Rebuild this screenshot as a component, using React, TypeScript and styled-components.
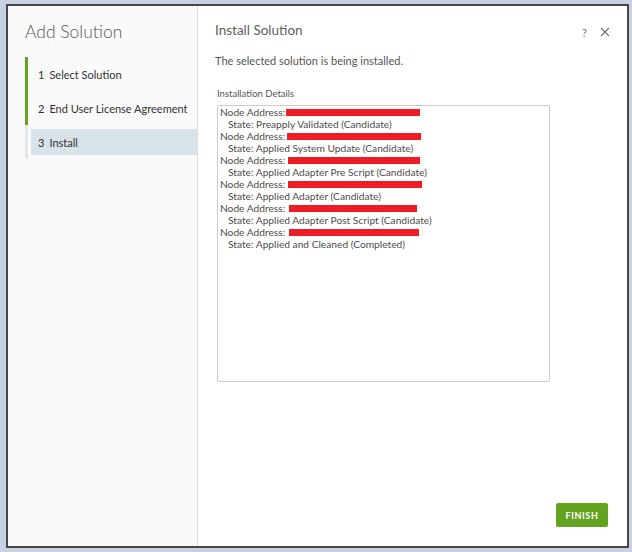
import styled, { createGlobalStyle } from "styled-components";

const GlobalStyle = createGlobalStyle`
  html, body {
    margin: 0;
    padding: 0;
    background: #c8d1e1;
  }
  body {
    font-family: Lato, "Liberation Sans", sans-serif;
    color: #565656;
  }
`;

const steps = [
  { num: 1, label: "Select Solution", done: true },
  { num: 2, label: "End User License Agreement", done: true },
  { num: 3, label: "Install", done: false, active: true },
];

const nodes = [
  { state: "Preapply Validated (Candidate)", bar: [1, 134] },
  { state: "Applied System Update (Candidate)", bar: [2, 134] },
  { state: "Applied Adapter Pre Script (Candidate)", bar: [3, 132] },
  { state: "Applied Adapter (Candidate)", bar: [3, 134] },
  { state: "Applied Adapter Post Script (Candidate)", bar: [4, 128] },
  { state: "Applied and Cleaned (Completed)", bar: [4, 130] },
];

export default function App() {
  return (
    <Page>
      <GlobalStyle />
      <Dialog>
        <Sidebar>
          <SideTitle>Add Solution</SideTitle>
          <StepList>
            {steps.map((s) => (
              <Step key={s.num} $done={s.done}>
                <StepLabel $active={s.active}>
                  <StepNum>{s.num}</StepNum>
                  {s.label}
                </StepLabel>
              </Step>
            ))}
          </StepList>
        </Sidebar>
        <Content>
          <Header>
            <Title>Install Solution</Title>
            <HeaderActions>
              <Help>?</Help>
              <Close viewBox="0 0 10 10">
                <path d="M1 1 L9 9 M9 1 L1 9" />
              </Close>
            </HeaderActions>
          </Header>
          <Message>The selected solution is being installed.</Message>
          <FieldLabel>Installation Details</FieldLabel>
          <Details>
            {nodes.map((n, i) => (
              <div key={i}>
                <Line>
                  Node Address:
                  <Redacted style={{ marginLeft: n.bar[0], width: n.bar[1] }} />
                </Line>
                <Line $indent>State: {n.state}</Line>
              </div>
            ))}
          </Details>
          <Footer>
            <FinishButton>FINISH</FinishButton>
          </Footer>
        </Content>
      </Dialog>
    </Page>
  );
}

const Page = styled.div`
  padding: 4px 0 0 6px;
  height: 552px;
  box-sizing: border-box;
`;

const Dialog = styled.div`
  width: 623px;
  height: 544px;
  box-sizing: border-box;
  border: 2px solid #474747;
  background: #fff;
  display: flex;
`;

const Sidebar = styled.div`
  width: 190px;
  flex-shrink: 0;
  background: #fafafa;
  border-right: 1px solid #dddddd;
  box-sizing: border-box;
  padding: 14px 0 0 17px;
`;

const SideTitle = styled.div`
  font-size: 17.5px;
  font-weight: 300;
  color: #565656;
  line-height: 24px;
  height: 37px;
`;

const StepList = styled.div`
  display: flex;
  flex-direction: column;
`;

const Step = styled.div<{ $done?: boolean }>`
  height: 34px;
  box-sizing: border-box;
  border-left: 3px solid ${(p) => (p.$done ? "#62a420" : "#e4e4e4")};
  padding: 4px 0 4px 3px;
  display: flex;
`;

const StepLabel = styled.div<{ $active?: boolean }>`
  flex: 1;
  display: flex;
  align-items: center;
  padding-left: 7px;
  font-size: 11px;
  color: #313131;
  background: ${(p) => (p.$active ? "#d8e3e9" : "transparent")};
`;

const StepNum = styled.span`
  margin-right: 5px;
`;

const Content = styled.div`
  flex: 1;
  display: flex;
  flex-direction: column;
  padding: 12px 0 0 17px;
  min-width: 0;
`;

const Header = styled.div`
  display: flex;
  align-items: center;
  justify-content: space-between;
  padding-right: 17px;
  height: 24px;
`;

const Title = styled.div`
  font-size: 13.5px;
  color: #5e5e5e;
`;

const HeaderActions = styled.div`
  display: flex;
  align-items: center;
  gap: 13px;
  margin-top: 4px;
`;

const Help = styled.span`
  font-size: 11px;
  color: #737373;
`;

const Close = styled.svg`
  width: 10px;
  height: 10px;
  stroke: #737373;
  stroke-width: 1.1;
  fill: none;
`;

const Message = styled.div`
  font-size: 11px;
  color: #565656;
  margin-top: 12px;
`;

const FieldLabel = styled.div`
  font-size: 9.5px;
  color: #565656;
  margin: 21px 0 0 2px;
`;

const Details = styled.div`
  margin: 6px 0 0 2px;
  width: 333px;
  height: 277px;
  box-sizing: border-box;
  border: 1px solid #cccccc;
  border-radius: 2px;
  padding: 0 0 0 2px;
`;

const Line = styled.div<{ $indent?: boolean }>`
  font-size: 10.2px;
  line-height: 12px;
  height: 12px;
  color: #4d4d4d;
  white-space: nowrap;
  display: flex;
  align-items: center;
  padding-left: ${(p) => (p.$indent ? "8px" : "0")};
`;

const Redacted = styled.span`
  display: inline-block;
  height: 7px;
  background: #ee1c25;
`;

const Footer = styled.div`
  margin-top: auto;
  display: flex;
  justify-content: flex-end;
  padding: 0 19px 19px 0;
`;

const FinishButton = styled.button`
  width: 52px;
  height: 24px;
  border: none;
  border-radius: 2px;
  background: #62a420;
  color: #fff;
  font-family: Lato, "Liberation Sans", sans-serif;
  font-size: 9px;
  font-weight: 700;
  letter-spacing: 0.6px;
  padding: 0;
`;
